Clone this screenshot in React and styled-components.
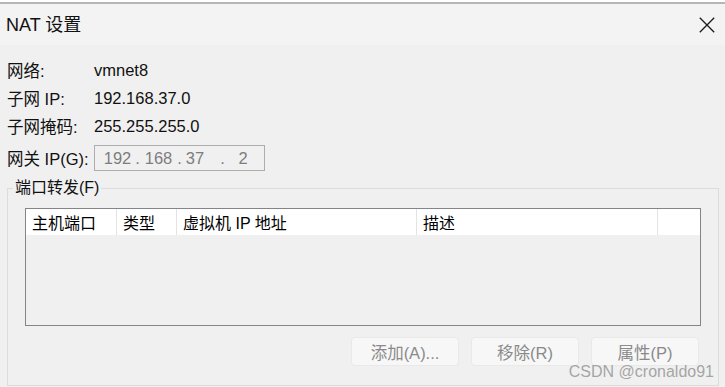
import styled, { createGlobalStyle } from 'styled-components';

const GlobalStyle = createGlobalStyle`
  html, body { margin: 0; padding: 0; background: #f0f0f0; }
  body {
    font-family: "Liberation Sans", "Noto Sans CJK SC", sans-serif;
    color: #111;
  }
  * { box-sizing: border-box; }
`;

const Window = styled.div`
  position: relative;
  width: 725px;
  height: 387px;
  overflow: hidden;
  display: flex;
  flex-direction: column;
  background: #f0f0f0;
`;

const BackStrip = styled.div`
  height: 4px;
  background: #ffffff;
  border-bottom: 2px solid #b5b5b5;
  flex-shrink: 0;
`;

const TitleBar = styled.div`
  height: 41px;
  flex-shrink: 0;
  display: flex;
  align-items: center;
  justify-content: space-between;
  padding: 0 10px 0 6px;
  background: #f3f3f3;
`;

const Title = styled.h1`
  margin: 0;
  font-size: 18px;
  font-weight: 400;
  color: #111;
  line-height: 1;
`;

const CloseBtn = styled.button`
  width: 16px;
  height: 16px;
  padding: 0;
  border: 0;
  background: transparent;
  display: flex;
  align-items: center;
  justify-content: center;
`;

const Body = styled.div`
  flex: 1;
  display: flex;
  flex-direction: column;
  padding: 11px 6px 0 7px;
  font-size: 16.5px;
`;

const InfoGrid = styled.div`
  display: grid;
  grid-template-columns: 87px 1fr;
  grid-auto-rows: 28px;
  align-items: center;
`;

const Label = styled.span`
  white-space: nowrap;
`;

const GatewayRow = styled.div`
  margin-top: 5px;
  height: 26px;
  display: grid;
  grid-template-columns: 87px 171px;
  align-items: center;
`;

const IpBox = styled.div`
  height: 26px;
  border: 1px solid #adadad;
  background: #f0f0f0;
  display: flex;
  align-items: center;
  padding-left: 5px;
  color: #7d7d7d;
  font-size: 16.5px;
`;

const IpCell = styled.span`
  width: ${({ $w }) => $w}px;
  text-align: center;
  flex-shrink: 0;
`;

const Group = styled.fieldset`
  margin: 7px 0 0 0;
  padding: 0;
  min-width: 0;
  border: 1px solid #dcdcdc;
`;

const Legend = styled.legend`
  margin-left: 5px;
  padding: 0 2px;
  font-size: 16px;
  line-height: 20px;
  color: #111;
`;

const GroupInner = styled.div`
  padding: 10px 17px 19px;
`;

const ListBox = styled.div`
  height: 118px;
  border: 1px solid #82868b;
  background: #f0f0f0;
`;

const HeaderRow = styled.div`
  height: 26px;
  display: grid;
  grid-template-columns: 91px 60px 240px 241px 1fr;
  background: #ffffff;
`;

const HeaderCell = styled.div`
  display: flex;
  align-items: center;
  padding-left: 6px;
  font-size: 16px;
  color: #000;
  border-right: ${({ $last }) => ($last ? 'none' : '1px solid #e3e3e3')};
  white-space: nowrap;
`;

const ButtonRow = styled.div`
  margin-top: 11px;
  display: flex;
  justify-content: flex-end;
  gap: 12px;
  padding-right: 2px;
`;

const DialogButton = styled.button`
  width: 108px;
  height: 29px;
  border: 1px solid #e9e9e9;
  border-radius: 4px;
  background: #f7f7f7;
  color: #8a8a8a;
  font-family: inherit;
  font-size: 16.5px;
  padding: 0;
`;

const Watermark = styled.div`
  position: absolute;
  right: 11px;
  bottom: 7px;
  font-family: "Liberation Sans", sans-serif;
  font-size: 16px;
  line-height: 17px;
  color: rgba(150, 150, 150, 0.85);
  pointer-events: none;
`;

const ipParts = [
  { t: '192', w: 35 },
  { t: '.', w: 5 },
  { t: '168', w: 37 },
  { t: '.', w: 5 },
  { t: '37', w: 26 },
  { t: '.', w: 29 },
  { t: '2', w: 12 },
];

const columns = ['主机端口', '类型', '虚拟机 IP 地址', '描述', ''];

export default function App() {
  return (
    <>
      <GlobalStyle />
      <Window>
        <BackStrip />
        <TitleBar>
          <Title>NAT 设置</Title>
          <CloseBtn aria-label="关闭">
            <svg width="16" height="16" viewBox="0 0 16 16">
              <path d="M0.8 0.8 L15.2 15.2 M15.2 0.8 L0.8 15.2" stroke="#1a1a1a" strokeWidth="1.3" fill="none" />
            </svg>
          </CloseBtn>
        </TitleBar>

        <Body>
          <InfoGrid>
            <Label>网络:</Label>
            <span>vmnet8</span>
            <Label>子网 IP:</Label>
            <span>192.168.37.0</span>
            <Label>子网掩码:</Label>
            <span>255.255.255.0</span>
          </InfoGrid>

          <GatewayRow>
            <Label>网关 IP(G):</Label>
            <IpBox>
              {ipParts.map((p, i) => (
                <IpCell key={i} $w={p.w}>{p.t}</IpCell>
              ))}
            </IpBox>
          </GatewayRow>

          <Group>
            <Legend>端口转发(F)</Legend>
            <GroupInner>
              <ListBox>
                <HeaderRow>
                  {columns.map((c, i) => (
                    <HeaderCell key={i} $last={i === columns.length - 1}>{c}</HeaderCell>
                  ))}
                </HeaderRow>
              </ListBox>
              <ButtonRow>
                <DialogButton disabled>添加(A)...</DialogButton>
                <DialogButton disabled>移除(R)</DialogButton>
                <DialogButton disabled>属性(P)</DialogButton>
              </ButtonRow>
            </GroupInner>
          </Group>
        </Body>

        <Watermark>CSDN @cronaldo91</Watermark>
      </Window>
    </>
  );
}
